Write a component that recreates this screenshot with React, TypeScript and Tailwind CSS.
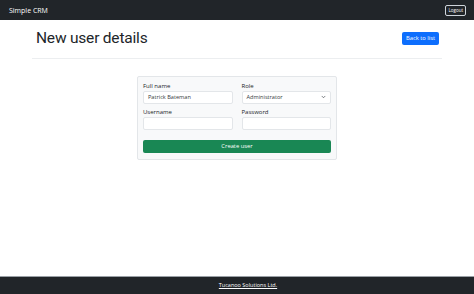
import React from "react";

export default function App() {
  return (
    <div
      className="min-h-screen flex flex-col bg-white text-[#212529]"
      style={{ fontFamily: '"Open Sans", "Noto Sans", sans-serif' }}
    >
      {/* Navbar */}
      <nav className="h-[20px] bg-[#212529] flex items-center justify-between pl-[9px] pr-[8px]">
        <span className="text-[7px] text-white leading-none">Simple CRM</span>
        <button className="h-[11px] px-[2px] border border-[#ced4da] rounded-[2px] text-[4.5px] text-white leading-none">
          Logout
        </button>
      </nav>

      <main className="flex-1">
        <div className="w-[410px] mx-auto">
          <div className="flex items-center justify-between pl-[4px] pr-[3px] pt-[11px] pb-[11px] border-b border-[#eceef0]">
            <h1
              className="text-[15.5px] font-normal leading-none tracking-[-0.2px]"
              style={{ fontFamily: "Roboto, sans-serif" }}
            >
              New user details
            </h1>
            <button className="h-[13px] w-[37px] rounded-[2px] bg-[#0d6efd] text-white text-[5.8px] leading-none">
              Back to list
            </button>
          </div>
        </div>

        {/* Form card */}
        <div className="w-[200px] mx-auto mt-[17px] bg-[#f8f9fa] border border-[#e3e6e9] rounded-[2px] px-[5px] pt-[5px] pb-[5px]">
          <div className="grid grid-cols-2 gap-x-[9px] gap-y-[4px]">
            <div className="flex flex-col">
              <label className="text-[6px] leading-[8px] mb-[1px]">Full name</label>
              <div className="h-[13px] bg-white border border-[#e3e6e9] rounded-[2px] flex items-center px-[4px] text-[5.6px] text-[#343a40]">
                Patrick Bateman
              </div>
            </div>
            <div className="flex flex-col">
              <label className="text-[6px] leading-[8px] mb-[1px]">Role</label>
              <div className="h-[13px] bg-white border border-[#e3e6e9] rounded-[2px] flex items-center justify-between px-[4px] text-[5.6px] text-[#343a40]">
                <span>Administrator</span>
                <svg width="5" height="4" viewBox="0 0 16 16" fill="none" stroke="#343a40" strokeWidth="2.5" strokeLinecap="round" strokeLinejoin="round">
                  <path d="M2 5l6 6 6-6" />
                </svg>
              </div>
            </div>
            <div className="flex flex-col">
              <label className="text-[6px] leading-[8px] mb-[1px]">Username</label>
              <div className="h-[13px] bg-white border border-[#e3e6e9] rounded-[2px]" />
            </div>
            <div className="flex flex-col">
              <label className="text-[6px] leading-[8px] mb-[1px]">Password</label>
              <div className="h-[13px] bg-white border border-[#e3e6e9] rounded-[2px]" />
            </div>
          </div>
          <button className="mt-[7px] w-full h-[13px] bg-[#198754] rounded-[2px] text-white text-[5.8px] leading-none">
            Create user
          </button>
        </div>
      </main>

      {/* Footer */}
      <footer className="h-[18px] bg-[#212529] border-t border-[#9aa0a6] flex items-center justify-center pl-[22px]">
        <span className="text-[5.5px] text-white underline leading-none">Tucanoo Solutions Ltd.</span>
      </footer>
    </div>
  );
}
